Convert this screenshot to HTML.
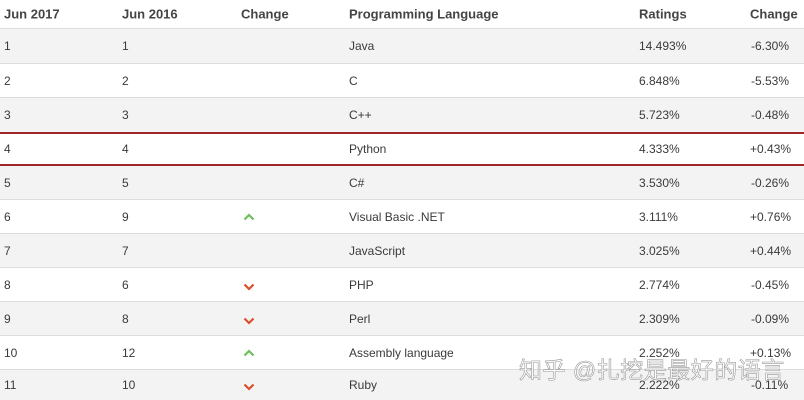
<!DOCTYPE html>
<html><head><meta charset="utf-8"><style>
body{margin:0;width:804px;height:400px;overflow:hidden;background:#fff;font-family:"Liberation Sans",Arial,sans-serif;font-size:12px;color:#3a3a3a;position:relative}
.r{position:absolute;left:0;width:804px;border-top:1px solid #ddd;box-sizing:border-box}
.g{background:#f3f3f3}
.c{position:absolute;top:50%;transform:translateY(-50%);white-space:nowrap}
.h{font-weight:bold;font-size:13px;color:#444}
.py{border-top:2px solid #a0262a;border-bottom:2px solid #a0262a}
.wm{position:absolute;left:519px;top:356px;font-family:"Liberation Sans","Noto Sans CJK SC",sans-serif;font-size:23px;line-height:28px;color:rgba(255,255,255,0.85);-webkit-text-stroke:0.6px #999;letter-spacing:0.5px}
</style></head><body>
<div class="r" style="top:0;height:28px;border-top:none">
<span class="c h" style="left:4px">Jun 2017</span><span class="c h" style="left:122px">Jun 2016</span><span class="c h" style="left:241px">Change</span><span class="c h" style="left:349px">Programming Language</span><span class="c h" style="left:639px">Ratings</span><span class="c h" style="left:750px">Change</span></div>
<div class="r g" style="top:28px;height:35px"><span class="c" style="left:4px">1</span><span class="c" style="left:122px">1</span><span class="c" style="left:349px">Java</span><span class="c" style="left:639px">14.493%</span><span class="c" style="left:751px">-6.30%</span></div>
<div class="r" style="top:63px;height:34px"><span class="c" style="left:4px">2</span><span class="c" style="left:122px">2</span><span class="c" style="left:349px">C</span><span class="c" style="left:639px">6.848%</span><span class="c" style="left:751px">-5.53%</span></div>
<div class="r g" style="top:97px;height:35px"><span class="c" style="left:4px">3</span><span class="c" style="left:122px">3</span><span class="c" style="left:349px">C++</span><span class="c" style="left:639px">5.723%</span><span class="c" style="left:751px">-0.48%</span></div>
<div class="r py" style="top:132px;height:34px"><span class="c" style="left:4px">4</span><span class="c" style="left:122px">4</span><span class="c" style="left:349px">Python</span><span class="c" style="left:639px">4.333%</span><span class="c" style="left:750px">+0.43%</span></div>
<div class="r g" style="top:166px;height:33px;border-top:none"><span class="c" style="left:4px">5</span><span class="c" style="left:122px">5</span><span class="c" style="left:349px">C#</span><span class="c" style="left:639px">3.530%</span><span class="c" style="left:751px">-0.26%</span></div>
<div class="r" style="top:199px;height:34px"><span class="c" style="left:4px">6</span><span class="c" style="left:122px">9</span><svg class="c" style="left:243px" width="12" height="8"><path d="M1.5 6.5L6 2L10.5 6.5" stroke="#6cbf5a" stroke-width="2.2" fill="none"/></svg><span class="c" style="left:349px">Visual Basic .NET</span><span class="c" style="left:639px">3.111%</span><span class="c" style="left:750px">+0.76%</span></div>
<div class="r g" style="top:233px;height:34px"><span class="c" style="left:4px">7</span><span class="c" style="left:122px">7</span><span class="c" style="left:349px">JavaScript</span><span class="c" style="left:639px">3.025%</span><span class="c" style="left:750px">+0.44%</span></div>
<div class="r" style="top:267px;height:34px"><span class="c" style="left:4px">8</span><span class="c" style="left:122px">6</span><svg class="c" style="left:243px;margin-top:2px" width="12" height="8"><path d="M1.5 1.5L6 6L10.5 1.5" stroke="#d9502e" stroke-width="2.2" fill="none"/></svg><span class="c" style="left:349px">PHP</span><span class="c" style="left:639px">2.774%</span><span class="c" style="left:751px">-0.45%</span></div>
<div class="r g" style="top:301px;height:34px"><span class="c" style="left:4px">9</span><span class="c" style="left:122px">8</span><svg class="c" style="left:243px;margin-top:2px" width="12" height="8"><path d="M1.5 1.5L6 6L10.5 1.5" stroke="#d9502e" stroke-width="2.2" fill="none"/></svg><span class="c" style="left:349px">Perl</span><span class="c" style="left:639px">2.309%</span><span class="c" style="left:751px">-0.09%</span></div>
<div class="r" style="top:335px;height:34px"><span class="c" style="left:4px">10</span><span class="c" style="left:122px">12</span><svg class="c" style="left:243px" width="12" height="8"><path d="M1.5 6.5L6 2L10.5 6.5" stroke="#6cbf5a" stroke-width="2.2" fill="none"/></svg><span class="c" style="left:349px">Assembly language</span><span class="c" style="left:639px">2.252%</span><span class="c" style="left:750px">+0.13%</span></div>
<div class="r g" style="top:369px;height:31px"><span class="c" style="left:4px">11</span><span class="c" style="left:122px">10</span><svg class="c" style="left:243px;margin-top:2px" width="12" height="8"><path d="M1.5 1.5L6 6L10.5 1.5" stroke="#d9502e" stroke-width="2.2" fill="none"/></svg><span class="c" style="left:349px">Ruby</span><span class="c" style="left:639px">2.222%</span><span class="c" style="left:751px">-0.11%</span></div>
<div class="wm">知乎 @扎挖是最好的语言</div>
</body></html>
